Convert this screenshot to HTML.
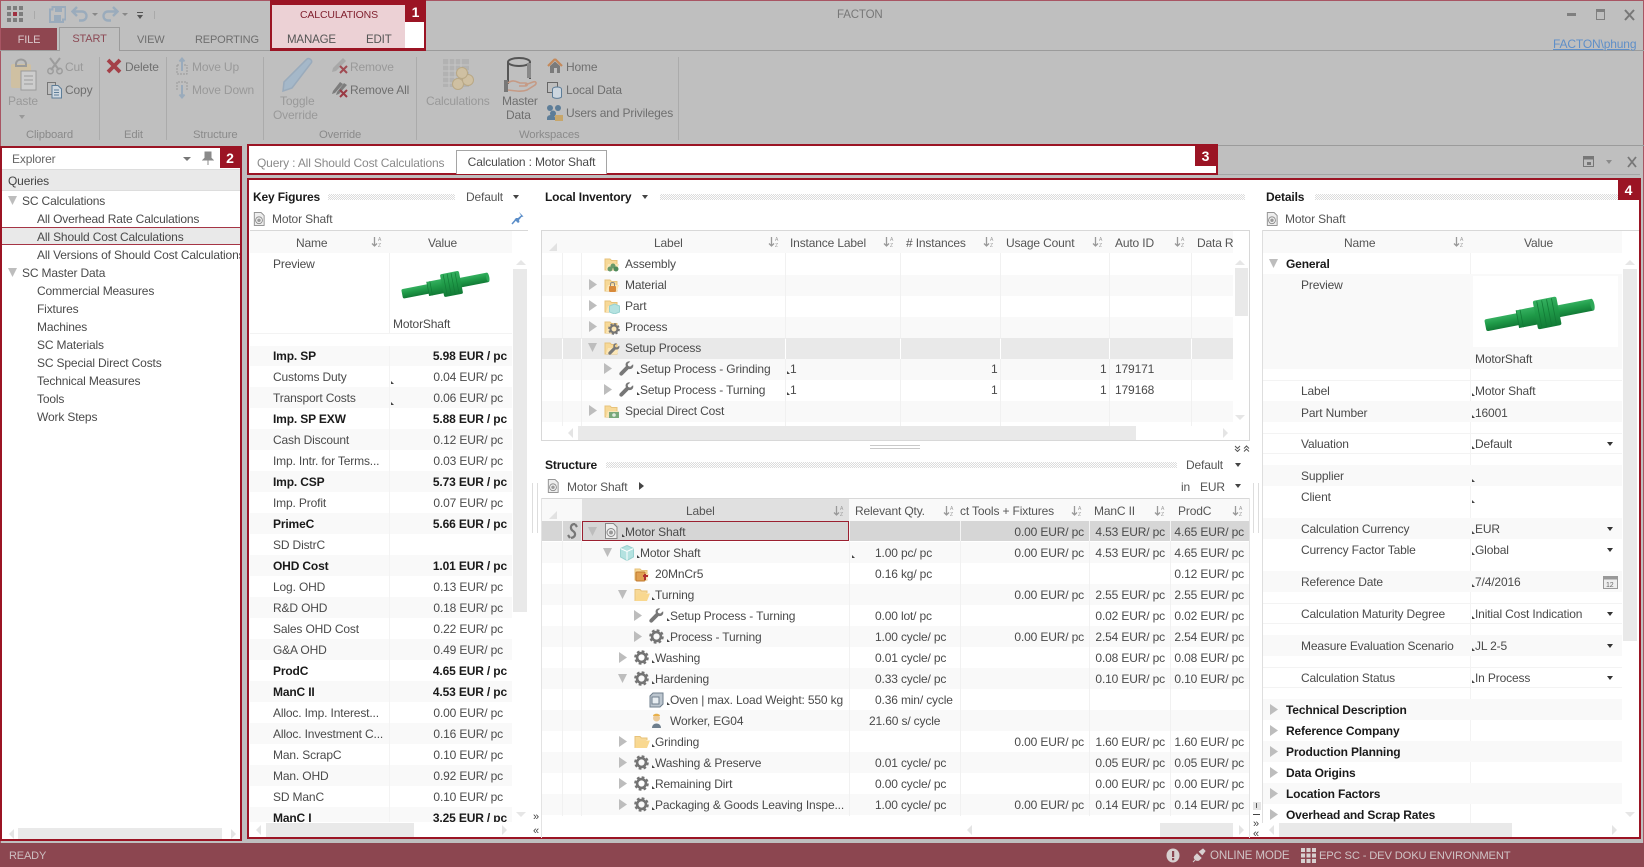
<!DOCTYPE html>
<html><head><meta charset="utf-8"><title>FACTON</title>
<style>
html,body{margin:0;padding:0;background:#bfbfbf}
#p{position:relative;width:1644px;height:867px;overflow:hidden;background:#bfbfbf;font:12px/16px "Liberation Sans",sans-serif;letter-spacing:-.15px;color:#4a4a4a}
#p div,#p span,#p svg{position:absolute;white-space:nowrap}
.t{height:16px}
.rb{color:#6f6f6f}.rd{color:#999}
.g{color:#8a8a8a;font-size:11.300px}
.sep{width:1px;background:#ababab;top:60px;height:82px}
.pn{box-sizing:border-box;border:2px solid #9b1424;background:#fff}
.bd{background:#9b1424;color:#fff;font-weight:bold;font-size:14px;line-height:20px;text-align:center;letter-spacing:0}
.dots{height:6px;background:repeating-conic-gradient(#dcdcdc 0 25%,#fff 0 50%) 0 0/2px 2px}
.b{font-weight:bold;color:#1a1a1a}
.r{height:21px;line-height:21px;left:0;right:0}
.a{background:#f9f9f9}
.r span{height:21px;line-height:21px}
.k::before{content:"";position:absolute;left:-3px;bottom:3px;border-bottom:3px solid #444;border-right:3px solid transparent}
.vl{width:1px;background:#f1f1f1;top:0;bottom:0}
.sb{background:#e9e9e9}
.tr{left:0;width:238px;height:18px;line-height:18px}
.hd{color:#555}
#st .t,#li .t{margin-top:1px}
</style></head><body>
<svg width="0" height="0" style="position:absolute;width:0;height:0"><defs>
<linearGradient id="gg" x1="0" y1="0" x2="0" y2="1"><stop offset="0" stop-color="#35b060"/><stop offset=".45" stop-color="#1f9a48"/><stop offset="1" stop-color="#127a36"/></linearGradient>
<symbol id="tr" viewBox="0 0 9 11"><path d="M1 0l8 5.500-8 5.500z" fill="#bdbdbd"/></symbol>
<symbol id="td" viewBox="0 0 9 11"><path d="M0 1h9l-4.500 9z" fill="#bdbdbd"/></symbol>
<symbol id="sort" viewBox="0 0 12 12"><path d="M3.500 1v9M1 7.500l2.500 2.500 2.500-2.500" fill="none" stroke="#999" stroke-width="1.300"/><text x="7" y="5" font-size="5" fill="#999" font-family="Liberation Sans">A</text><text x="7" y="11" font-size="5" fill="#999" font-family="Liberation Sans">Z</text></symbol>
<symbol id="doc" viewBox="0 0 14 16"><path d="M1.500.5h8l3.500 3.500v11.500h-11.500z" fill="#eee" stroke="#888"/><circle cx="7" cy="9.500" r="4" fill="none" stroke="#888"/><circle cx="7" cy="9.500" r="2" fill="#999"/></symbol>
<symbol id="gear" viewBox="0 0 16 16"><circle cx="8" cy="8" r="4.700" fill="none" stroke="#747474" stroke-width="2.800"/><circle cx="8" cy="8" r="6.600" fill="none" stroke="#747474" stroke-width="2.400" stroke-dasharray="2.900 2.280"/></symbol>
<symbol id="wr" viewBox="0 0 16 16"><path d="M15 3.500l-3 2.500-2.200-.7-.6-2.200L12 .6C9.600-.1 7.300 1 7 3.700c0 .7.100 1.300.4 1.800L1 12c-1 1-.8 2.400 0 3.100.8.800 2 .8 2.800 0l6.500-6.600c3 .9 5.800-1.600 4.700-5z" fill="#777"/></symbol>
<symbol id="fo" viewBox="0 0 16 16"><path d="M1 14V3h5l1.500 1.500H13V14z" fill="#f7d998" stroke="#e7c27a"/><path d="M2 14l2-6h11l-2 6z" fill="#fbe6b6"/></symbol>
<symbol id="ofo" viewBox="0 0 16 16"><path d="M1 14V2.500h5l1.500 1.500H13v2" fill="#f7d998" stroke="#e7c27a"/><path d="M1 14l2.500-7.500H16L13 14z" fill="#f9d88f"/></symbol>
<symbol id="cube" viewBox="0 0 16 16"><path d="M8 .5l6.500 3v8.500L8 15.500 1.500 12V3.500z" fill="#b4e2e0" stroke="#9ad2d0"/><path d="M1.500 3.500L8 6.500l6.500-3M8 6.500v9" fill="none" stroke="#fff"/></symbol>
<symbol id="shaft" viewBox="0 0 112 40"><g transform="rotate(-11 56 20)"><rect x="1" y="16" width="110" height="12" rx="2" fill="url(#gg)"/><rect x="34" y="13" width="40" height="18" fill="url(#gg)"/><rect x="52" y="7" width="24" height="29" rx="2" fill="url(#gg)"/><path d="M56 8v27M61 8v27M66 8v27M71 8v27" stroke="#127a36" stroke-width=".800"/><path d="M34 13v18M38 13v18" stroke="#127a36" stroke-width=".800"/><ellipse cx="110" cy="22" rx="2" ry="6" fill="#2da858"/></g></symbol>
</defs></svg>
<div id="p">
<div style="left:0;top:0;width:1644px;height:1px;background:#a85563"></div>
<div style="left:0;top:0;width:1px;height:867px;background:#a85563"></div>
<div style="left:1643px;top:0;width:1px;height:867px;background:#a85563"></div>
<div style="left:0;top:50px;width:1644px;height:1px;background:#9b9b9b"></div>
<div style="left:1218px;top:145px;width:426px;height:1px;background:#9b9b9b"></div>
<div style="left:1218px;top:174px;width:422px;height:1px;background:#a5a5a5"></div>

<!-- QAT -->
<svg style="left:6px;top:5px" width="18" height="18"><g fill="#7d7d7d"><rect x="1" y="1" width="4" height="4"/><rect x="7" y="1" width="4" height="4"/><rect x="13" y="1" width="4" height="4"/><rect x="1" y="7" width="4" height="4"/><rect x="7" y="7" width="4" height="4" fill="#a03040"/><rect x="13" y="7" width="4" height="4"/><rect x="1" y="13" width="4" height="4"/><rect x="7" y="13" width="4" height="4"/><rect x="13" y="13" width="4" height="4"/></g></svg>
<div style="left:34px;top:11px;width:1px;height:8px;background:#a9a9a9"></div>
<svg style="left:49px;top:6px" width="17" height="17"><path d="M1 3.500h2.500V1h13v12.500H14V16H1z" fill="none" stroke="#9aabbc" stroke-width="2"/><rect x="5" y="9" width="7" height="6" fill="#9aabbc"/><rect x="6" y="2" width="7" height="4" fill="#9aabbc"/></svg>
<svg style="left:71px;top:6px" width="18" height="17"><path d="M6 1L1.500 5.500 6 10M2 5.500h9c6 0 6 9 0 9H8" fill="none" stroke="#9aabbc" stroke-width="2.400"/></svg>
<svg style="left:101px;top:6px" width="18" height="17"><path d="M12 1l4.500 4.500L12 10M16 5.500H7c-6 0-6 9 0 9h3" fill="none" stroke="#9aabbc" stroke-width="2.400"/></svg>
<div style="left:92px;top:13px;border-top:3px solid #888;border-left:3px solid transparent;border-right:3px solid transparent"></div>
<div style="left:122px;top:13px;border-top:3px solid #888;border-left:3px solid transparent;border-right:3px solid transparent"></div>
<div style="left:137px;top:12px;width:6px;height:1px;background:#555"></div><div style="left:137px;top:15px;border-top:4px solid #555;border-left:3px solid transparent;border-right:3px solid transparent"></div>
<div style="left:154px;top:11px;width:1px;height:8px;background:#a9a9a9"></div>

<!-- tabs -->
<div style="left:1px;top:28px;width:56px;height:22px;background:#8f4650;color:#d9c6c9;text-align:center;line-height:24px;font-size:11px">FILE</div>
<div style="left:59px;top:27px;width:61px;height:24px;box-sizing:border-box;border:1px solid #9b9b9b;border-bottom:0;background:#bfbfbf;color:#8c4a55;text-align:center;line-height:23px;font-size:11px">START</div>
<div class="t" style="left:137px;top:32px;color:#6f6f6f;font-size:11px">VIEW</div>
<div class="t" style="left:195px;top:32px;color:#6f6f6f;font-size:11px">REPORTING</div>

<!-- panel 1 -->
<div style="left:270px;top:0;width:156px;height:51px;background:#9b1424"></div>
<div style="left:272px;top:5px;width:133px;height:43px;background:#ecd1d5"></div>
<div style="left:405px;top:22px;width:19px;height:26px;background:#fff"></div>
<div class="bd" style="left:405px;top:2px;width:21px;height:20px;background:transparent">1</div>
<div class="t" style="left:300px;top:7px;color:#7f1e2c;font-size:10.500px">CALCULATIONS</div>
<div class="t" style="left:287px;top:32px;color:#555;font-size:11.500px">MANAGE</div>
<div class="t" style="left:366px;top:32px;color:#555;font-size:11.500px">EDIT</div>

<!-- title -->
<div class="t" style="left:837px;top:7px;color:#777;font-size:11.500px">FACTON</div>
<div style="left:1567px;top:13px;width:9px;height:3px;background:#7f7f7f"></div>
<div style="left:1596px;top:9px;width:9px;height:11px;box-sizing:border-box;border:1px solid #7f7f7f;border-top-width:3px"></div>
<svg style="left:1624px;top:9px" width="11" height="12"><path d="M1 1l9 10M10 1L1 11" stroke="#777" stroke-width="2"/></svg>
<div class="t" style="left:1553px;top:36px;color:#5f8fc8;text-decoration:underline">FACTON\phung</div>

<!-- ribbon -->
<svg style="left:10px;top:58px" width="28" height="34"><rect x="1" y="6" width="20" height="24" rx="2" fill="#cfc0a2"/><path d="M6 6c0-6 10-6 10 0v2H6z" fill="none" stroke="#9a9a9a" stroke-width="2"/><rect x="11" y="13" width="15" height="19" fill="#cdcdcd" stroke="#9a9a9a"/><path d="M14 18h9M14 22h9M14 26h9" stroke="#9a9a9a"/></svg>
<div class="t rd" style="left:8px;top:93px">Paste</div>
<div style="left:19px;top:115px;border-top:4px solid #999;border-left:3px solid transparent;border-right:3px solid transparent"></div>
<svg style="left:47px;top:57px" width="16" height="18"><path d="M3 1l9 12M13 1L4 13" stroke="#9c9c9c" stroke-width="2"/><circle cx="3.500" cy="14" r="2.700" fill="none" stroke="#9c9c9c" stroke-width="1.500"/><circle cx="12.500" cy="14" r="2.700" fill="none" stroke="#9c9c9c" stroke-width="1.500"/></svg>
<div class="t rd" style="left:65px;top:59px">Cut</div>
<svg style="left:46px;top:81px" width="17" height="18"><path d="M1.500 1.500h8v12h-8z" fill="#bfbfbf" stroke="#777"/><path d="M6 4.500h6l3.500 3.500v9H6z" fill="#cfd8e0" stroke="#5d7d98"/><path d="M8 9h5M8 11.500h5M8 14h5" stroke="#5d7d98"/></svg>
<div class="t rb" style="left:65px;top:82px">Copy</div>
<div style="left:99px;top:57px;width:1px;height:83px;background:#ababab"></div>
<svg style="left:106px;top:58px" width="16" height="16"><path d="M2 2l12 12M14 2L2 14" stroke="#a44048" stroke-width="3.800"/></svg>
<div class="t rb" style="left:125px;top:59px">Delete</div>
<div style="left:166px;top:57px;width:1px;height:83px;background:#ababab"></div>
<svg style="left:176px;top:57px" width="12" height="18"><path d="M1 8h3M8 8h3M1 8v9h10V8" fill="none" stroke="#999" stroke-dasharray="2 1"/><path d="M6 14V2M3.500 4.500L6 1.500l2.500 3" fill="none" stroke="#9aabbc" stroke-width="2"/></svg>
<div class="t rd" style="left:192px;top:59px">Move Up</div>
<svg style="left:176px;top:81px" width="12" height="18"><path d="M1 9V1h10v8" fill="none" stroke="#999" stroke-dasharray="2 1"/><path d="M6 4v12M3.500 13.500L6 16.500l2.500-3" fill="none" stroke="#9aabbc" stroke-width="2"/></svg>
<div class="t rd" style="left:192px;top:82px">Move Down</div>
<div class="t g" style="left:26px;top:127px">Clipboard</div>
<div class="t g" style="left:124px;top:127px">Edit</div>
<div class="t g" style="left:193px;top:127px">Structure</div>
<div style="left:263px;top:57px;width:1px;height:83px;background:#ababab"></div>
<svg style="left:281px;top:57px" width="34" height="36"><path d="M26 2c2-1.500 5.500 1 4.500 3.500L11 31 2 34l1-9z" fill="#a5b8c9" stroke="#9aabbc" stroke-width="1.500"/></svg>
<div class="t rd" style="left:280px;top:93px">Toggle</div>
<div class="t rd" style="left:273px;top:107px">Override</div>
<svg style="left:331px;top:57px" width="18" height="18"><path d="M12 1l3 3-10 10-4 1 1-4z" fill="#a8a8a8"/><path d="M9 9l7 7M16 9l-7 7" stroke="#a04a52" stroke-width="2"/></svg>
<div class="t rd" style="left:350px;top:59px">Remove</div>
<svg style="left:331px;top:81px" width="18" height="18"><path d="M9 1l3 2-8 9-3 1 1-3zM13 2l3 2-8 9-3 1 1-3z" fill="#7d7d7d"/><path d="M9 9l7 7M16 9l-7 7" stroke="#9a3a44" stroke-width="2"/></svg>
<div class="t rb" style="left:350px;top:82px">Remove All</div>
<div class="t g" style="left:319px;top:127px">Override</div>
<div style="left:416px;top:57px;width:1px;height:83px;background:#ababab"></div>
<svg style="left:442px;top:58px" width="34" height="34"><rect x="1" y="1" width="26" height="28" fill="#b2b2b2"/><path d="M1 7h26M1 13h26M1 19h26M1 25h26M7 1v28M13 1v28M19 1v28" stroke="#c6c6c6"/><circle cx="16" cy="26" r="5.500" fill="#cfc0a2" stroke="#b9a885"/><circle cx="26" cy="22" r="5.500" fill="#cfc0a2" stroke="#b9a885"/><circle cx="20" cy="15" r="5.500" fill="#cfc0a2" stroke="#b9a885"/></svg>
<div class="t rd" style="left:426px;top:93px">Calculations</div>
<svg style="left:503px;top:57px" width="34" height="36"><ellipse cx="16" cy="5" rx="11" ry="4" fill="#bfbfbf" stroke="#555" stroke-width="2"/><path d="M5 5v22M27 5v17" stroke="#555" stroke-width="2"/><path d="M26 6v15" stroke="#888" stroke-width="4"/><rect x="1" y="23" width="4" height="12" fill="#777"/><path d="M5 26c5-4 9-1 12 0h5c3 0 3 3 0 3h-6M22 28l8-3c3-1 4 1 2 3l-8 5c-5 2-11 1-19 0" fill="none" stroke="#c59a85" stroke-width="1.600"/></svg>
<div class="t rb" style="left:502px;top:93px">Master</div>
<div class="t rb" style="left:506px;top:107px">Data</div>
<svg style="left:547px;top:58px" width="16" height="16"><path d="M8 1L1 8M8 1l7 7" stroke="#c4895a" stroke-width="2.200" fill="none"/><path d="M3 8l5-4.500L13 8v7H3z" fill="#7b7b7b"/><rect x="7" y="10" width="3" height="5" fill="#bfbfbf"/></svg>
<div class="t rb" style="left:566px;top:59px">Home</div>
<svg style="left:546px;top:81px" width="17" height="18"><path d="M1.500 1.500h10v10h-10z" fill="none" stroke="#666"/><ellipse cx="11" cy="8" rx="4.500" ry="2" fill="#ccd6df" stroke="#5d7d98"/><path d="M6.500 8v8c2 1.800 7 1.800 9 0V8" fill="#ccd6df" stroke="#5d7d98"/></svg>
<div class="t rb" style="left:566px;top:82px">Local Data</div>
<svg style="left:546px;top:104px" width="17" height="18"><circle cx="4" cy="4" r="3" fill="#5d7d98"/><circle cx="12" cy="4" r="3" fill="#5d7d98"/><circle cx="7" cy="9.500" r="3" fill="#5d7d98"/><path d="M1 14c0-4 8-4 8 0v2H1z" fill="#5d7d98"/><rect x="9" y="11" width="8" height="6" fill="#c7a66a"/></svg>
<div class="t rb" style="left:566px;top:105px">Users and Privileges</div>
<div class="t g" style="left:519px;top:127px">Workspaces</div>
<div style="left:678px;top:57px;width:1px;height:83px;background:#ababab"></div>

<!-- panel 3 -->
<div class="pn" style="left:247px;top:144px;width:971px;height:31px"></div>
<div class="t" style="left:257px;top:155px;color:#8a8a8a">Query : All Should Cost Calculations</div>
<div style="left:456px;top:150px;width:151px;height:24px;box-sizing:border-box;border:1px solid #a5a5a5;border-bottom:0;background:#fff;color:#4a4a4a;text-align:center;line-height:23px">Calculation : Motor Shaft</div>
<div class="bd" style="left:1195px;top:146px;width:21px;height:20px">3</div>
<svg style="left:1583px;top:156px" width="11" height="11"><rect x=".5" y=".5" width="10" height="10" fill="none" stroke="#777"/><rect x=".5" y=".5" width="10" height="3" fill="#777"/><rect x="4" y="6" width="4" height="3" fill="#777"/></svg>
<div style="left:1606px;top:160px;border-top:4px solid #8a8a8a;border-left:3px solid transparent;border-right:3px solid transparent"></div>
<svg style="left:1627px;top:156px" width="10" height="12"><path d="M1 1l8 10M9 1L1 11" stroke="#777" stroke-width="1.800"/></svg>

<!-- panel 2 -->
<div class="pn" style="left:0;top:146px;width:242px;height:695px;overflow:hidden">
 <div class="t" style="left:10px;top:3px;color:#666">Explorer</div>
 <div style="left:181px;top:9px;border-top:4px solid #777;border-left:4px solid transparent;border-right:4px solid transparent"></div>
 <svg style="left:200px;top:3px" width="12" height="14"><path d="M3 1h6v6l2 2H1l2-2zM6 9v5" fill="#8a8a8a" stroke="#8a8a8a"/></svg>
 <div class="bd" style="left:218px;top:0;width:20px;height:20px">2</div>
 <div style="left:0;top:21px;width:238px;height:22px;background:#e9e9e9;border-top:1px solid #ddd;border-bottom:1px solid #ddd;box-sizing:border-box;line-height:22px;padding-left:6px;color:#444">Queries</div>
 <div style="left:0;top:44px;width:238px;height:270px">
  <svg style="left:6px;top:3px" width="9" height="11"><use href="#td"/></svg>
  <div class="tr" style="left:20px;top:0">SC Calculations</div>
  <div class="tr" style="left:35px;top:18px">All Overhead Rate Calculations</div>
  <div style="left:0;top:35px;width:238px;height:18px;background:#e9e9e9;border-top:1px solid #a53545;border-bottom:1px solid #a53545;box-sizing:border-box"></div>
  <div class="tr" style="left:35px;top:36px">All Should Cost Calculations</div>
  <div class="tr" style="left:35px;top:54px">All Versions of Should Cost Calculations</div>
  <svg style="left:6px;top:75px" width="9" height="11"><use href="#td"/></svg>
  <div class="tr" style="left:20px;top:72px">SC Master Data</div>
  <div class="tr" style="left:35px;top:90px">Commercial Measures</div>
  <div class="tr" style="left:35px;top:108px">Fixtures</div>
  <div class="tr" style="left:35px;top:126px">Machines</div>
  <div class="tr" style="left:35px;top:144px">SC Materials</div>
  <div class="tr" style="left:35px;top:162px">SC Special Direct Costs</div>
  <div class="tr" style="left:35px;top:180px">Technical Measures</div>
  <div class="tr" style="left:35px;top:198px">Tools</div>
  <div class="tr" style="left:35px;top:216px">Work Steps</div>
 </div>
 <div class="sb" style="left:16px;top:680px;width:204px;height:11px"></div>
 <div style="left:7px;top:681px;border-right:5px solid #e4e4e4;border-top:5px solid transparent;border-bottom:5px solid transparent"></div>
 <div style="left:229px;top:681px;border-left:5px solid #e4e4e4;border-top:5px solid transparent;border-bottom:5px solid transparent"></div>
</div>

<!-- panel 4 -->
<div class="pn" style="left:247px;top:178px;width:1394px;height:661px"></div>
<div class="bd" style="left:1618px;top:180px;width:21px;height:20px">4</div>

<!-- key figures -->
<div class="t b" style="left:253px;top:189px;font-size:12px">Key Figures</div>
<div class="dots" style="left:328px;top:194px;width:127px"></div>
<div class="t" style="left:466px;top:189px;color:#555">Default</div>
<div style="left:513px;top:195px;border-top:4px solid #444;border-left:3px solid transparent;border-right:3px solid transparent"></div>
<svg style="left:253px;top:212px" width="12" height="14"><use href="#doc"/></svg>
<div class="t" style="left:272px;top:211px;color:#555">Motor Shaft</div>
<svg style="left:511px;top:211px" width="13" height="14"><path d="M8 1l4.500 4.500-2 .5-2.500 3 .5 2-1.500 1L3.500 8.500 5 7l2 0 3-2.500z" fill="#5a8dc8"/><path d="M4.500 9L1 13" stroke="#5a8dc8" stroke-width="1.500"/></svg>
<div style="left:250px;top:230px;width:278px;height:1px;background:#d8d8d8"></div>
<div style="left:250px;top:231px;width:262px;height:22px;background:#f9f9f9"></div>
<div class="t hd" style="left:296px;top:235px">Name</div>
<svg style="left:371px;top:236px" width="12" height="12"><use href="#sort"/></svg>
<div class="t hd" style="left:428px;top:235px">Value</div>
<div class="t" style="left:273px;top:256px">Preview</div>
<svg style="left:400px;top:268px" width="90" height="32"><use href="#shaft"/></svg>
<div class="t" style="left:393px;top:316px">MotorShaft</div>
<div style="left:389px;top:253px;width:1px;height:80px;background:#f1f1f1"></div>
<div style="left:250px;top:333px;width:262px;height:1px;background:#f3f3f3"></div>
<div style="left:250px;top:346px;width:262px;height:476px;overflow:hidden">
<div class="r a b" style="top:-1px"><span style="left:23px;top:1px">Imp. SP</span><span style="right:5px;top:1px">5.98 EUR / pc</span></div>
<div class="r" style="top:20px"><span style="left:23px;top:1px">Customs Duty</span><span class="k" style="left:144px;width:2px"></span><span style="right:9px;top:1px">0.04 EUR/ pc</span></div>
<div class="r a" style="top:41px"><span style="left:23px;top:1px">Transport Costs</span><span class="k" style="left:144px;width:2px"></span><span style="right:9px;top:1px">0.06 EUR/ pc</span></div>
<div class="r b" style="top:62px"><span style="left:23px;top:1px">Imp. SP EXW</span><span style="right:5px;top:1px">5.88 EUR / pc</span></div>
<div class="r a" style="top:83px"><span style="left:23px;top:1px">Cash Discount</span><span style="right:9px;top:1px">0.12 EUR/ pc</span></div>
<div class="r" style="top:104px"><span style="left:23px;top:1px">Imp. Intr. for Terms...</span><span style="right:9px;top:1px">0.03 EUR/ pc</span></div>
<div class="r a b" style="top:125px"><span style="left:23px;top:1px">Imp. CSP</span><span style="right:5px;top:1px">5.73 EUR / pc</span></div>
<div class="r" style="top:146px"><span style="left:23px;top:1px">Imp. Profit</span><span style="right:9px;top:1px">0.07 EUR/ pc</span></div>
<div class="r a b" style="top:167px"><span style="left:23px;top:1px">PrimeC</span><span style="right:5px;top:1px">5.66 EUR / pc</span></div>
<div class="r" style="top:188px"><span style="left:23px;top:1px">SD DistrC</span></div>
<div class="r a b" style="top:209px"><span style="left:23px;top:1px">OHD Cost</span><span style="right:5px;top:1px">1.01 EUR / pc</span></div>
<div class="r" style="top:230px"><span style="left:23px;top:1px">Log. OHD</span><span style="right:9px;top:1px">0.13 EUR/ pc</span></div>
<div class="r a" style="top:251px"><span style="left:23px;top:1px">R&amp;D OHD</span><span style="right:9px;top:1px">0.18 EUR/ pc</span></div>
<div class="r" style="top:272px"><span style="left:23px;top:1px">Sales OHD Cost</span><span style="right:9px;top:1px">0.22 EUR/ pc</span></div>
<div class="r a" style="top:293px"><span style="left:23px;top:1px">G&amp;A OHD</span><span style="right:9px;top:1px">0.49 EUR/ pc</span></div>
<div class="r b" style="top:314px"><span style="left:23px;top:1px">ProdC</span><span style="right:5px;top:1px">4.65 EUR / pc</span></div>
<div class="r a b" style="top:335px"><span style="left:23px;top:1px">ManC II</span><span style="right:5px;top:1px">4.53 EUR / pc</span></div>
<div class="r" style="top:356px"><span style="left:23px;top:1px">Alloc. Imp. Interest...</span><span style="right:9px;top:1px">0.00 EUR/ pc</span></div>
<div class="r a" style="top:377px"><span style="left:23px;top:1px">Alloc. Investment C...</span><span style="right:9px;top:1px">0.16 EUR/ pc</span></div>
<div class="r" style="top:398px"><span style="left:23px;top:1px">Man. ScrapC</span><span style="right:9px;top:1px">0.10 EUR/ pc</span></div>
<div class="r a" style="top:419px"><span style="left:23px;top:1px">Man. OHD</span><span style="right:9px;top:1px">0.92 EUR/ pc</span></div>
<div class="r" style="top:440px"><span style="left:23px;top:1px">SD ManC</span><span style="right:9px;top:1px">0.10 EUR/ pc</span></div>
<div class="r a b" style="top:461px"><span style="left:23px;top:1px">ManC I</span><span style="right:5px;top:1px">3.25 EUR / pc</span></div>
<div class="vl" style="left:139px;background:#f3f3f3"></div>
</div>
<div class="sb" style="left:513px;top:269px;width:14px;height:343px"></div>
<div style="left:516px;top:260px;border-bottom:5px solid #e6e6e6;border-left:5px solid transparent;border-right:5px solid transparent"></div>
<div style="left:516px;top:812px;border-top:5px solid #e6e6e6;border-left:5px solid transparent;border-right:5px solid transparent"></div>
<div class="sb" style="left:266px;top:823px;width:148px;height:14px"></div>
<div style="left:256px;top:825px;border-right:5px solid #e4e4e4;border-top:5px solid transparent;border-bottom:5px solid transparent"></div>
<div style="left:502px;top:825px;border-left:5px solid #e4e4e4;border-top:5px solid transparent;border-bottom:5px solid transparent"></div>
<div style="left:533px;top:812px;font-size:11px;color:#444;line-height:11px">»</div>
<div style="left:533px;top:826px;font-size:11px;color:#444;line-height:11px">«</div>
<div style="left:532px;top:483px;width:1px;height:50px;background:#ddd"></div>
<div style="left:537px;top:483px;width:1px;height:50px;background:#ddd"></div>

<!-- local inventory -->
<div class="t b" style="left:545px;top:189px">Local Inventory</div>
<div style="left:642px;top:195px;border-top:4px solid #444;border-left:3px solid transparent;border-right:3px solid transparent"></div>
<div class="dots" style="left:660px;top:194px;width:585px"></div>
<div style="left:541px;top:230px;width:709px;height:211px;box-sizing:border-box;border:1px solid #d8d8d8"></div>
<div style="left:542px;top:231px;width:691px;height:22px;background:#f9f9f9"></div>
<div style="left:549px;top:243px;border-bottom:8px solid #e2e2e2;border-left:8px solid transparent"></div>
<div class="t hd" style="left:654px;top:235px">Label</div><svg style="left:768px;top:236px" width="12" height="12"><use href="#sort"/></svg>
<div class="t hd" style="left:790px;top:235px">Instance Label</div><svg style="left:883px;top:236px" width="12" height="12"><use href="#sort"/></svg>
<div class="t hd" style="left:906px;top:235px"># Instances</div><svg style="left:983px;top:236px" width="12" height="12"><use href="#sort"/></svg>
<div class="t hd" style="left:1006px;top:235px">Usage Count</div><svg style="left:1092px;top:236px" width="12" height="12"><use href="#sort"/></svg>
<div class="t hd" style="left:1115px;top:235px">Auto ID</div><svg style="left:1174px;top:236px" width="12" height="12"><use href="#sort"/></svg>
<div class="t hd" style="left:1197px;top:235px;width:36px;overflow:hidden">Data Reference</div>
<div id="li" style="left:542px;top:253px;width:691px;height:173px;overflow:hidden">
 <div class="r" style="top:1px"></div>
 <div class="r a" style="top:22px"></div>
 <div class="r" style="top:43px"></div>
 <div class="r a" style="top:64px"></div>
 <div class="r" style="top:85px;background:#e9e9e9"></div>
 <div class="r a" style="top:106px"></div>
 <div class="r" style="top:127px"></div>
 <div class="r a" style="top:148px"></div>
 <div class="vl" style="left:20px"></div><div class="vl" style="left:39px"></div><div class="vl" style="left:243px"></div><div class="vl" style="left:358px"></div><div class="vl" style="left:458px"></div><div class="vl" style="left:567px"></div><div class="vl" style="left:649px"></div>
 <div style="left:20px;top:86px;width:1px;height:20px;background:#fff"></div><div style="left:39px;top:86px;width:1px;height:20px;background:#fff"></div><div style="left:243px;top:86px;width:1px;height:20px;background:#fff"></div><div style="left:358px;top:86px;width:1px;height:20px;background:#fff"></div><div style="left:458px;top:86px;width:1px;height:20px;background:#fff"></div><div style="left:567px;top:86px;width:1px;height:20px;background:#fff"></div><div style="left:649px;top:86px;width:1px;height:20px;background:#fff"></div>
 <svg style="left:62px;top:3px" width="16" height="16"><use href="#fo"/><circle cx="9" cy="10" r="2.500" fill="#6a9a6a"/><circle cx="12" cy="13" r="2.500" fill="#4f8a5a"/><circle cx="6" cy="13" r="2.500" fill="#6a9a6a"/></svg>
 <div class="t" style="left:83px;top:2px">Assembly</div>
 <svg style="left:46px;top:26px" width="9" height="11"><use href="#tr"/></svg>
 <svg style="left:62px;top:24px" width="16" height="16"><use href="#fo"/><rect x="5" y="9" width="7" height="6" rx="1" fill="#d88a3a"/><path d="M6.500 9V7c0-2 4-2 4 0v2" fill="none" stroke="#888"/></svg>
 <div class="t" style="left:83px;top:23px">Material</div>
 <svg style="left:46px;top:47px" width="9" height="11"><use href="#tr"/></svg>
 <svg style="left:62px;top:45px" width="16" height="16"><use href="#fo"/><path d="M10.500 6l5 2v6l-5 2-5-2V8z" fill="#b4e2e0" stroke="#9ad2d0"/></svg>
 <div class="t" style="left:83px;top:44px">Part</div>
 <svg style="left:46px;top:68px" width="9" height="11"><use href="#tr"/></svg>
 <svg style="left:62px;top:66px" width="16" height="16"><use href="#fo"/><svg x="4" y="4" width="12" height="12" viewBox="0 0 16 16"><use href="#gear"/></svg></svg>
 <div class="t" style="left:83px;top:65px">Process</div>
 <svg style="left:46px;top:89px" width="9" height="11"><use href="#td"/></svg>
 <svg style="left:62px;top:87px" width="16" height="16"><use href="#fo"/><svg x="4" y="3" width="12" height="12" viewBox="0 0 16 16"><use href="#wr"/></svg></svg>
 <div class="t" style="left:83px;top:86px">Setup Process</div>
 <svg style="left:61px;top:110px" width="9" height="11"><use href="#tr"/></svg>
 <svg style="left:77px;top:108px" width="15" height="15"><use href="#wr"/></svg>
 <div class="t k" style="left:98px;top:107px">Setup Process - Grinding</div>
 <div class="t k" style="left:248px;top:107px">1</div>
 <div class="t" style="left:449px;top:107px">1</div>
 <div class="t" style="left:558px;top:107px">1</div>
 <div class="t" style="left:573px;top:107px">179171</div>
 <svg style="left:61px;top:131px" width="9" height="11"><use href="#tr"/></svg>
 <svg style="left:77px;top:129px" width="15" height="15"><use href="#wr"/></svg>
 <div class="t k" style="left:98px;top:128px">Setup Process - Turning</div>
 <div class="t k" style="left:248px;top:128px">1</div>
 <div class="t" style="left:449px;top:128px">1</div>
 <div class="t" style="left:558px;top:128px">1</div>
 <div class="t" style="left:573px;top:128px">179168</div>
 <svg style="left:46px;top:152px" width="9" height="11"><use href="#tr"/></svg>
 <svg style="left:62px;top:150px" width="16" height="16"><use href="#fo"/><rect x="5" y="9" width="10" height="6" fill="#7aa87a"/><circle cx="10" cy="12" r="1.800" fill="#dfeadf"/></svg>
 <div class="t" style="left:83px;top:149px">Special Direct Cost</div>
 <svg style="left:62px;top:171px" width="16" height="16"><use href="#fo"/></svg>
</div>
<div style="left:1235px;top:260px;border-bottom:5px solid #e6e6e6;border-left:5px solid transparent;border-right:5px solid transparent"></div>
<div class="sb" style="left:1235px;top:268px;width:13px;height:48px"></div>
<div style="left:1235px;top:415px;border-top:5px solid #e6e6e6;border-left:5px solid transparent;border-right:5px solid transparent"></div>
<div class="sb" style="left:578px;top:426px;width:558px;height:14px"></div>
<div style="left:568px;top:428px;border-right:5px solid #e4e4e4;border-top:5px solid transparent;border-bottom:5px solid transparent"></div>
<div style="left:1223px;top:428px;border-left:5px solid #e4e4e4;border-top:5px solid transparent;border-bottom:5px solid transparent"></div>
<div style="left:870px;top:445px;width:50px;height:1px;background:#c9c9c9"></div>
<div style="left:870px;top:448px;width:50px;height:1px;background:#c9c9c9"></div>
<svg style="left:1234px;top:445px" width="16" height="7"><path d="M1 1l2.500 2.500L6 1M1 4l2.500 2.500L6 4M10 3.500L12.500 1 15 3.500M10 6.500L12.500 4 15 6.500" fill="none" stroke="#555"/></svg>

<!-- structure -->
<div class="t b" style="left:545px;top:457px">Structure</div>
<div class="dots" style="left:606px;top:462px;width:571px"></div>
<div class="t" style="left:1186px;top:457px;color:#555">Default</div>
<div style="left:1235px;top:463px;border-top:4px solid #444;border-left:3px solid transparent;border-right:3px solid transparent"></div>
<svg style="left:547px;top:479px" width="12" height="14"><use href="#doc"/></svg>
<div class="t" style="left:567px;top:479px;color:#555">Motor Shaft</div>
<div style="left:639px;top:482px;border-left:5px solid #444;border-top:4px solid transparent;border-bottom:4px solid transparent"></div>
<div class="t" style="left:1181px;top:479px;color:#555">in</div>
<div class="t" style="left:1200px;top:479px;color:#555">EUR</div>
<div style="left:1235px;top:484px;border-top:4px solid #444;border-left:3px solid transparent;border-right:3px solid transparent"></div>
<div style="left:541px;top:498px;width:709px;height:1px;background:#d8d8d8"></div>
<div style="left:541px;top:498px;width:1px;height:340px;background:#e3e3e3"></div>
<div style="left:1249px;top:498px;width:1px;height:340px;background:#e3e3e3"></div>
<div style="left:542px;top:499px;width:707px;height:22px;background:#f9f9f9"></div>
<div style="left:582px;top:499px;width:267px;height:22px;background:#e0e0e0"></div>
<div style="left:549px;top:511px;border-bottom:8px solid #e2e2e2;border-left:8px solid transparent"></div>
<div class="t hd" style="left:686px;top:503px">Label</div><svg style="left:833px;top:505px" width="12" height="12"><use href="#sort"/></svg>
<div class="t hd" style="left:855px;top:503px">Relevant Qty.</div><svg style="left:943px;top:505px" width="12" height="12"><use href="#sort"/></svg>
<div class="t hd" style="left:960px;top:503px;width:94px;overflow:hidden;direction:rtl;text-align:right"><span style="position:static;direction:ltr;unicode-bidi:bidi-override">Direct Tools + Fixtures</span></div><svg style="left:1071px;top:505px" width="12" height="12"><use href="#sort"/></svg>
<div class="t hd" style="left:1094px;top:503px">ManC II</div><svg style="left:1154px;top:505px" width="12" height="12"><use href="#sort"/></svg>
<div class="t hd" style="left:1178px;top:503px">ProdC</div><svg style="left:1232px;top:505px" width="12" height="12"><use href="#sort"/></svg>
<div id="st" style="left:542px;top:521px;width:707px;height:295px;overflow:hidden">
<div class="r" style="top:0;height:20px;background:#d6d6d6"></div>
<div class="r a" style="top:21px"></div>
<div class="r" style="top:42px"></div>
<div class="r a" style="top:63px"></div>
<div class="r" style="top:84px"></div>
<div class="r a" style="top:105px"></div>
<div class="r" style="top:126px"></div>
<div class="r a" style="top:147px"></div>
<div class="r" style="top:168px"></div>
<div class="r a" style="top:189px"></div>
<div class="r" style="top:210px"></div>
<div class="r a" style="top:231px"></div>
<div class="r" style="top:252px"></div>
<div class="r a" style="top:273px"></div>
<div class="vl" style="left:20px"></div><div class="vl" style="left:39px"></div><div class="vl" style="left:307px"></div><div class="vl" style="left:418px"></div><div class="vl" style="left:547px"></div><div class="vl" style="left:628px"></div>
<div style="left:418px;top:0;width:1px;height:20px;background:#f4f4f4"></div><div style="left:547px;top:0;width:1px;height:20px;background:#f4f4f4"></div><div style="left:628px;top:0;width:1px;height:20px;background:#f4f4f4"></div><div style="left:20px;top:0;width:1px;height:20px;background:#f4f4f4"></div>
<div style="left:40px;top:0;width:267px;height:20px;box-sizing:border-box;border:1px solid #9b2030"></div>
<svg style="left:24px;top:2px" width="13" height="16"><path d="M9 1C4 1 4 6 7 8s3 6-2 7M4 15l-2-3M9 1l2 3" fill="none" stroke="#777" stroke-width="2.200"/></svg>
<svg style="left:46px;top:5px" width="9" height="11"><use href="#td"/></svg>
<svg style="left:62px;top:2px" width="14" height="16"><use href="#doc"/></svg>
<div class="t k" style="left:83px;top:2px">Motor Shaft</div>
<div class="t" style="right:165px;top:2px">0.00 EUR/ pc</div><div class="t" style="right:84px;top:2px">4.53 EUR/ pc</div><div class="t" style="right:5px;top:2px">4.65 EUR/ pc</div>

<svg style="left:61px;top:26px" width="9" height="11"><use href="#td"/></svg>
<svg style="left:77px;top:24px" width="16" height="16"><use href="#cube"/></svg>
<div class="t k" style="left:98px;top:23px">Motor Shaft</div>
<div class="t k" style="left:313px;top:23px;width:1px"></div>
<div class="t" style="left:333px;top:23px">1.00 pc/ pc</div>
<div class="t" style="right:165px;top:23px">0.00 EUR/ pc</div><div class="t" style="right:84px;top:23px">4.53 EUR/ pc</div><div class="t" style="right:5px;top:23px">4.65 EUR/ pc</div>

<svg style="left:92px;top:45px" width="16" height="16"><use href="#fo"/><rect x="2" y="6" width="9" height="9" rx="1" fill="#e0a050" stroke="#c07a30"/><path d="M11 8v6M9 10h5" stroke="#b03030" stroke-width="2"/></svg>
<div class="t" style="left:113px;top:44px">20MnCr5</div>
<div class="t" style="left:333px;top:44px">0.16 kg/ pc</div>
<div class="t" style="right:5px;top:44px">0.12 EUR/ pc</div>

<svg style="left:76px;top:68px" width="9" height="11"><use href="#td"/></svg>
<svg style="left:92px;top:66px" width="16" height="16"><use href="#ofo"/></svg>
<div class="t k" style="left:113px;top:65px">Turning</div>
<div class="t" style="right:165px;top:65px">0.00 EUR/ pc</div><div class="t" style="right:84px;top:65px">2.55 EUR/ pc</div><div class="t" style="right:5px;top:65px">2.55 EUR/ pc</div>

<svg style="left:91px;top:89px" width="9" height="11"><use href="#tr"/></svg>
<svg style="left:107px;top:87px" width="15" height="15"><use href="#wr"/></svg>
<div class="t k" style="left:128px;top:86px">Setup Process - Turning</div>
<div class="t" style="left:333px;top:86px">0.00 lot/ pc</div>
<div class="t" style="right:84px;top:86px">0.02 EUR/ pc</div><div class="t" style="right:5px;top:86px">0.02 EUR/ pc</div>

<svg style="left:91px;top:110px" width="9" height="11"><use href="#tr"/></svg>
<svg style="left:107px;top:108px" width="15" height="15"><use href="#gear"/></svg>
<div class="t k" style="left:128px;top:107px">Process - Turning</div>
<div class="t" style="left:333px;top:107px">1.00 cycle/ pc</div>
<div class="t" style="right:165px;top:107px">0.00 EUR/ pc</div><div class="t" style="right:84px;top:107px">2.54 EUR/ pc</div><div class="t" style="right:5px;top:107px">2.54 EUR/ pc</div>

<svg style="left:76px;top:131px" width="9" height="11"><use href="#tr"/></svg>
<svg style="left:92px;top:129px" width="15" height="15"><use href="#gear"/></svg>
<div class="t k" style="left:113px;top:128px">Washing</div>
<div class="t" style="left:333px;top:128px">0.01 cycle/ pc</div>
<div class="t" style="right:84px;top:128px">0.08 EUR/ pc</div><div class="t" style="right:5px;top:128px">0.08 EUR/ pc</div>

<svg style="left:76px;top:152px" width="9" height="11"><use href="#td"/></svg>
<svg style="left:92px;top:150px" width="15" height="15"><use href="#gear"/></svg>
<div class="t k" style="left:113px;top:149px">Hardening</div>
<div class="t" style="left:333px;top:149px">0.33 cycle/ pc</div>
<div class="t" style="right:84px;top:149px">0.10 EUR/ pc</div><div class="t" style="right:5px;top:149px">0.10 EUR/ pc</div>

<svg style="left:107px;top:171px" width="15" height="16"><path d="M4 1h10v11l-3 3H1V4z" fill="#bcc6cf" stroke="#6f7f8d"/><rect x="3" y="5" width="7" height="7" fill="#e8eef2" stroke="#6f7f8d"/></svg>
<div class="t k" style="left:128px;top:170px">Oven | max. Load Weight: 550 kg</div>
<div class="t" style="left:333px;top:170px">0.36 min/ cycle</div>

<svg style="left:108px;top:192px" width="13" height="16"><circle cx="6.500" cy="5" r="3.500" fill="#eccb9a"/><path d="M3 3c0-3 7-3 7 0z" fill="#e8b04a"/><path d="M2 15c0-6 9-6 9 0z" fill="#6f7f8d"/></svg>
<div class="t" style="left:128px;top:191px">Worker, EG04</div>
<div class="t" style="left:327px;top:191px">21.60 s/ cycle</div>

<svg style="left:76px;top:215px" width="9" height="11"><use href="#tr"/></svg>
<svg style="left:92px;top:213px" width="16" height="16"><use href="#ofo"/></svg>
<div class="t k" style="left:113px;top:212px">Grinding</div>
<div class="t" style="right:165px;top:212px">0.00 EUR/ pc</div><div class="t" style="right:84px;top:212px">1.60 EUR/ pc</div><div class="t" style="right:5px;top:212px">1.60 EUR/ pc</div>

<svg style="left:76px;top:236px" width="9" height="11"><use href="#tr"/></svg>
<svg style="left:92px;top:234px" width="15" height="15"><use href="#gear"/></svg>
<div class="t k" style="left:113px;top:233px">Washing &amp; Preserve</div>
<div class="t" style="left:333px;top:233px">0.01 cycle/ pc</div>
<div class="t" style="right:84px;top:233px">0.05 EUR/ pc</div><div class="t" style="right:5px;top:233px">0.05 EUR/ pc</div>

<svg style="left:76px;top:257px" width="9" height="11"><use href="#tr"/></svg>
<svg style="left:92px;top:255px" width="15" height="15"><use href="#gear"/></svg>
<div class="t k" style="left:113px;top:254px">Remaining Dirt</div>
<div class="t" style="left:333px;top:254px">0.00 cycle/ pc</div>
<div class="t" style="right:84px;top:254px">0.00 EUR/ pc</div><div class="t" style="right:5px;top:254px">0.00 EUR/ pc</div>

<svg style="left:76px;top:278px" width="9" height="11"><use href="#tr"/></svg>
<svg style="left:92px;top:276px" width="15" height="15"><use href="#gear"/></svg>
<div class="t k" style="left:113px;top:275px">Packaging &amp; Goods Leaving Inspe...</div>
<div class="t" style="left:333px;top:275px">1.00 cycle/ pc</div>
<div class="t" style="right:165px;top:275px">0.00 EUR/ pc</div><div class="t" style="right:84px;top:275px">0.14 EUR/ pc</div><div class="t" style="right:5px;top:275px">0.14 EUR/ pc</div>
</div>
<div class="sb" style="left:1160px;top:823px;width:73px;height:14px"></div>
<div style="left:967px;top:825px;border-right:5px solid #e4e4e4;border-top:5px solid transparent;border-bottom:5px solid transparent"></div>
<div style="left:1239px;top:825px;border-left:5px solid #e4e4e4;border-top:5px solid transparent;border-bottom:5px solid transparent"></div>
<div style="left:1253px;top:483px;width:1px;height:50px;background:#ddd"></div>
<div style="left:1258px;top:483px;width:1px;height:50px;background:#ddd"></div>
<div style="left:1253px;top:802px;width:8px;height:8px;background:#e4e4e4"></div>
<div style="left:1256px;top:803px;width:1px;height:5px;background:#555"></div>
<div style="left:1253px;top:814px;width:7px;height:1px;background:#444"></div>
<div style="left:1253px;top:819px;font-size:11px;color:#444;line-height:11px">»</div>
<div style="left:1253px;top:829px;font-size:11px;color:#444;line-height:11px">«</div>

<!-- details -->
<div class="t b" style="left:1266px;top:189px">Details</div>
<div class="dots" style="left:1315px;top:194px;width:303px"></div>
<svg style="left:1266px;top:212px" width="12" height="14"><use href="#doc"/></svg>
<div class="t" style="left:1285px;top:211px;color:#555">Motor Shaft</div>
<div style="left:1262px;top:230px;width:377px;height:1px;background:#d8d8d8"></div>
<div style="left:1262px;top:230px;width:1px;height:593px;background:#dedede"></div>
<div style="left:1263px;top:231px;width:359px;height:22px;background:#f9f9f9"></div>
<div class="t hd" style="left:1344px;top:235px">Name</div>
<svg style="left:1453px;top:236px" width="12" height="12"><use href="#sort"/></svg>
<div class="t hd" style="left:1524px;top:235px">Value</div>
<div style="left:1263px;top:253px;width:359px;height:570px;overflow:hidden">
 <div style="left:207px;top:0;bottom:0;width:1px;background:#f3f3f3"></div>
 <svg style="left:6px;top:5px" width="9" height="11"><use href="#td"/></svg>
 <div class="t b" style="left:23px;top:3px">General</div>
 <div class="a" style="left:0;top:21px;width:359px;height:95px"></div>
 <div class="t" style="left:38px;top:24px">Preview</div>
 <div style="left:210px;top:23px;width:145px;height:71px;background:#fff"></div>
 <svg style="left:220px;top:40px" width="112" height="40"><use href="#shaft"/></svg>
 <div class="t" style="left:212px;top:98px">MotorShaft</div>

 <div style="left:0;top:127px;width:359px;height:21px;border-top:1px solid #f3f3f3;box-sizing:border-box"></div>
 <div class="t" style="left:38px;top:130px">Label</div><div class="t k" style="left:212px;top:130px">Motor Shaft</div>
 <div class="a" style="left:0;top:148px;width:359px;height:21px"></div>
 <div class="t" style="left:38px;top:152px">Part Number</div><div class="t k" style="left:212px;top:152px">16001</div>
 <div style="left:0;top:180px;width:359px;height:21px;border-top:1px solid #f3f3f3;border-bottom:1px solid #f3f3f3;box-sizing:border-box"></div>
 <div class="t" style="left:38px;top:183px">Valuation</div><div class="t k" style="left:212px;top:183px">Default</div>
 <div style="left:344px;top:189px;border-top:4px solid #333;border-left:3.500px solid transparent;border-right:3.500px solid transparent"></div>
 <div class="a" style="left:0;top:212px;width:359px;height:21px"></div>
 <div class="t" style="left:38px;top:215px">Supplier</div><div class="t k" style="left:212px;top:216px;width:2px"></div>
 <div class="t" style="left:38px;top:236px">Client</div><div class="t k" style="left:212px;top:237px;width:2px"></div>
 <div class="a" style="left:0;top:265px;width:359px;height:21px"></div>
 <div class="t" style="left:38px;top:268px">Calculation Currency</div><div class="t k" style="left:212px;top:268px">EUR</div>
 <div style="left:344px;top:274px;border-top:4px solid #333;border-left:3.500px solid transparent;border-right:3.500px solid transparent"></div>
 <div class="t" style="left:38px;top:289px">Currency Factor Table</div><div class="t k" style="left:212px;top:289px">Global</div>
 <div style="left:344px;top:295px;border-top:4px solid #333;border-left:3.500px solid transparent;border-right:3.500px solid transparent"></div>
 <div class="a" style="left:0;top:318px;width:359px;height:21px"></div>
 <div class="t" style="left:38px;top:321px">Reference Date</div><div class="t k" style="left:212px;top:321px">7/4/2016</div>
 <svg style="left:340px;top:321px" width="15" height="15"><rect x=".5" y="2.500" width="14" height="12" fill="#eee" stroke="#999"/><rect x=".5" y="2.500" width="14" height="3" fill="#999"/><text x="3" y="13" font-size="7" fill="#666" font-family="Liberation Sans">12</text></svg>
 <div style="left:0;top:350px;width:359px;height:21px;border-top:1px solid #f3f3f3;border-bottom:1px solid #f3f3f3;box-sizing:border-box"></div>
 <div class="t" style="left:38px;top:353px">Calculation Maturity Degree</div><div class="t k" style="left:212px;top:353px">Initial Cost Indication</div>
 <div style="left:344px;top:359px;border-top:4px solid #333;border-left:3.500px solid transparent;border-right:3.500px solid transparent"></div>
 <div class="a" style="left:0;top:382px;width:359px;height:21px"></div>
 <div class="t" style="left:38px;top:385px">Measure Evaluation Scenario</div><div class="t k" style="left:212px;top:385px">JL 2-5</div>
 <div style="left:344px;top:391px;border-top:4px solid #333;border-left:3.500px solid transparent;border-right:3.500px solid transparent"></div>
 <div style="left:0;top:414px;width:359px;height:21px;border-top:1px solid #f3f3f3;border-bottom:1px solid #f3f3f3;box-sizing:border-box"></div>
 <div class="t" style="left:38px;top:417px">Calculation Status</div><div class="t k" style="left:212px;top:417px">In Process</div>
 <div style="left:344px;top:423px;border-top:4px solid #333;border-left:3.500px solid transparent;border-right:3.500px solid transparent"></div>
 <div class="a" style="left:0;top:446px;width:359px;height:21px"></div>
 <svg style="left:6px;top:451px" width="9" height="11"><use href="#tr"/></svg><div class="t b" style="left:23px;top:449px">Technical Description</div>
 <svg style="left:6px;top:472px" width="9" height="11"><use href="#tr"/></svg><div class="t b" style="left:23px;top:470px">Reference Company</div>
 <div class="a" style="left:0;top:488px;width:359px;height:21px"></div>
 <svg style="left:6px;top:493px" width="9" height="11"><use href="#tr"/></svg><div class="t b" style="left:23px;top:491px">Production Planning</div>
 <svg style="left:6px;top:514px" width="9" height="11"><use href="#tr"/></svg><div class="t b" style="left:23px;top:512px">Data Origins</div>
 <div class="a" style="left:0;top:530px;width:359px;height:21px"></div>
 <svg style="left:6px;top:535px" width="9" height="11"><use href="#tr"/></svg><div class="t b" style="left:23px;top:533px">Location Factors</div>
 <svg style="left:6px;top:556px" width="9" height="11"><use href="#tr"/></svg><div class="t b" style="left:23px;top:554px">Overhead and Scrap Rates</div>
</div>
<div style="left:1625px;top:260px;border-bottom:5px solid #e6e6e6;border-left:5px solid transparent;border-right:5px solid transparent"></div>
<div class="sb" style="left:1623px;top:269px;width:14px;height:372px"></div>
<div style="left:1625px;top:812px;border-top:5px solid #e6e6e6;border-left:5px solid transparent;border-right:5px solid transparent"></div>
<div class="sb" style="left:1279px;top:823px;width:233px;height:14px"></div>
<div style="left:1269px;top:825px;border-right:5px solid #e4e4e4;border-top:5px solid transparent;border-bottom:5px solid transparent"></div>
<div style="left:1612px;top:825px;border-left:5px solid #e4e4e4;border-top:5px solid transparent;border-bottom:5px solid transparent"></div>

<!-- status -->
<div style="left:0;top:843px;width:1644px;height:24px;background:#8c4650"></div>
<div class="t" style="left:9px;top:848px;color:#cdbfc1;font-size:11px">READY</div>
<svg style="left:1166px;top:848px" width="14" height="15"><ellipse cx="7" cy="7.500" rx="6.500" ry="7" fill="#d8d0d0"/><rect x="6" y="3" width="2.200" height="6" fill="#8c4650"/><rect x="6" y="10" width="2.200" height="2.200" fill="#8c4650"/></svg>
<svg style="left:1192px;top:848px" width="14" height="15"><path d="M1 14l3-3M5 6l4 4-2 2c-2 1-3 0-4-1s-1-2 0-3zM7 4l4-3 2 2-3 4" fill="#d8d0d0" stroke="#d8d0d0"/></svg>
<div class="t" style="left:1210px;top:848px;color:#d0c4c6;font-size:11.600px">ONLINE MODE</div>
<svg style="left:1301px;top:848px" width="15" height="15"><g fill="#d8d0d0"><rect x="0" y="0" width="4" height="4"/><rect x="5.500" y="0" width="4" height="4"/><rect x="11" y="0" width="4" height="4"/><rect x="0" y="5.500" width="4" height="4"/><rect x="5.500" y="5.500" width="4" height="4"/><rect x="11" y="5.500" width="4" height="4"/><rect x="0" y="11" width="4" height="4"/><rect x="5.500" y="11" width="4" height="4"/><rect x="11" y="11" width="4" height="4"/></g></svg>
<div class="t" style="left:1319px;top:848px;color:#d0c4c6;font-size:11.200px">EPC SC - DEV DOKU ENVIRONMENT</div>
</div>
</body></html>
